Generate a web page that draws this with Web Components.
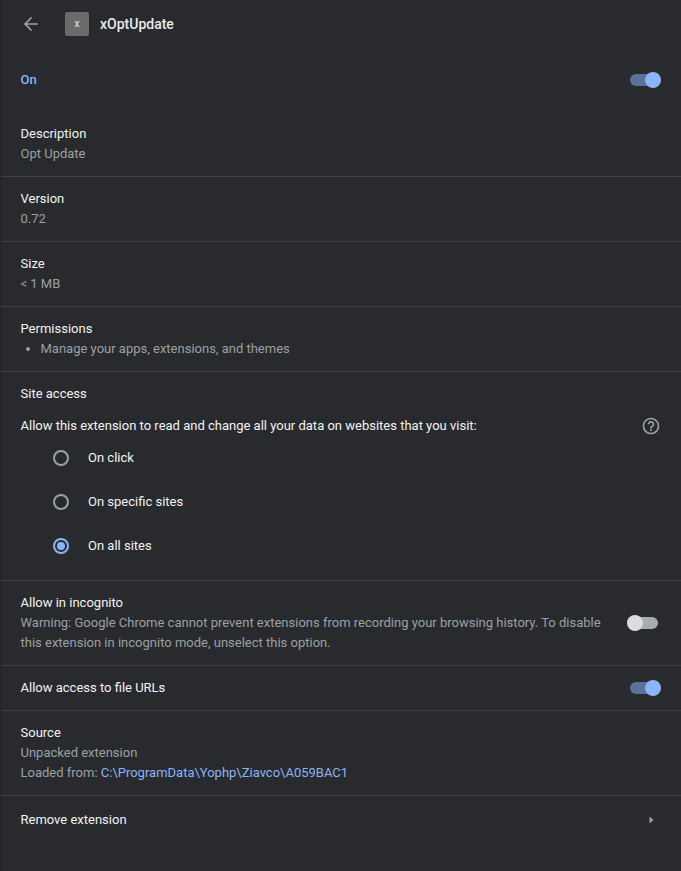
<!DOCTYPE html>
<html><head><meta charset="utf-8"><style>
html,body{margin:0;padding:0;background:#292a2d;height:100%}
body{font:13px/20px Roboto,"Liberation Sans",sans-serif;color:#f1f3f4}
</style></head><body>
<ext-page></ext-page>
<script>
const mk=(name,html)=>customElements.define(name,class extends HTMLElement{
  constructor(){super();this.attachShadow({mode:'open'}).innerHTML=html;}
});
mk('ext-toggle',`<style>
:host{display:block;position:relative;width:28px;height:12px;flex:none}
.t{position:absolute;inset:0;border-radius:6px;background:#a8acb1}
.k{position:absolute;top:-2px;left:-3px;width:16px;height:16px;border-radius:50%;background:#dadce0}
:host([on]) .t{background:#5a7299}
:host([on]) .k{left:auto;right:-3px;background:#8ab4f8}
</style><div class="t"></div><div class="k"></div>`);
mk('ext-radio',`<style>
:host{display:flex;align-items:center;height:44px;padding-left:52px;color:#f1f3f4}
.r{width:16px;height:16px;box-sizing:border-box;border:2px solid #9aa0a6;border-radius:50%;margin-right:19px;display:flex;align-items:center;justify-content:center;flex:none}
:host([on]) .r{border-color:#8ab4f8}
:host([on]) .r::after{content:"";width:8px;height:8px;border-radius:50%;background:#8ab4f8}
</style><span class="r"></span><slot></slot>`);
mk('ext-row',`<style>
:host{display:block;box-sizing:border-box;padding:12px 20px 12px 19.5px;border-top:1px solid #3f4042;min-height:65px}
.l{color:#f1f3f4}
.s{color:#9aa0a6}
::slotted(a){color:#8ab4f8;text-decoration:none}
</style><div class="l"><slot name="label"></slot></div><div class="s"><slot></slot></div>`);
mk('ext-flexrow',`<style>
:host{display:flex;align-items:center;box-sizing:border-box;padding:0 23px 0 19.5px;border-top:1px solid #3f4042;color:#f1f3f4;justify-content:space-between}
</style><slot></slot>`);
mk('ext-header',`<style>
:host{display:flex;align-items:center;height:48px;box-sizing:border-box}
svg.b{margin-left:19px;width:22px;height:22px;flex:none}
.i{width:24px;height:24px;margin-left:23px;background:#6b6b6b;border-radius:2px;color:#e8eaed;font:10px/24px Roboto,sans-serif;text-align:center;flex:none}
.n{margin-left:11px;font-size:14px;font-weight:500;color:#e8eaed}
</style><svg class="b" viewBox="0 0 22 22"><path d="M18 11H5.500M11.500 4.500 5 11l6.500 6.500" fill="none" stroke="#9aa0a6" stroke-width="1.700"/></svg><div class="i">x</div><div class="n">xOptUpdate</div>`);
mk('ext-page',`<style>
:host{display:block;width:681px;height:871px;box-sizing:border-box;border-left:1px solid #232427;overflow:hidden}
.on{display:flex;align-items:center;justify-content:space-between;height:63px;padding:0 23px 0 19.5px;box-sizing:border-box;font-weight:500;color:#8ab4f8}
ul{margin:0;padding:0 0 0 20px;list-style:none}
li{position:relative}
li::before{content:"";position:absolute;left:-14.500px;top:8px;width:4px;height:4px;border-radius:50%;background:#9aa0a6}
.site{display:block;border-top:1px solid #3f4042;height:209px;box-sizing:border-box;padding:12px 20px 0 19.5px}
.q{display:flex;justify-content:space-between;align-items:center;margin-top:12px}
.rows{margin:0 -20px 0 -19.5px}
.q svg{flex:none}
.inc{display:flex;align-items:center;justify-content:space-between;min-height:85px;border-top:1px solid #3f4042;box-sizing:border-box;padding:0 23px 0 19.5px}
.inc .t{width:590px}
.inc .g{color:#9aa0a6}
</style>
<ext-header></ext-header>
<div class="on"><span>On</span><ext-toggle on></ext-toggle></div>
<ext-row style="border-top:0;padding-top:13px"><span slot="label">Description</span>Opt Update</ext-row>
<ext-row><span slot="label">Version</span>0.72</ext-row>
<ext-row><span slot="label">Size</span>&lt; 1 MB</ext-row>
<ext-row><span slot="label">Permissions</span><ul><li>Manage your apps, extensions, and themes</li></ul></ext-row>
<div class="site"><div>Site access</div>
<div class="q"><span>Allow this extension to read and change all your data on websites that you visit:</span>
<svg width="20" height="20" viewBox="0 0 24 24" fill="#9aa0a6"><path d="M11 18h2v-2h-2v2zm1-16C6.480 2 2 6.480 2 12s4.480 10 10 10 10-4.480 10-10S17.520 2 12 2zm0 18c-4.410 0-8-3.590-8-8s3.590-8 8-8 8 3.590 8 8-3.590 8-8 8zm0-14c-2.210 0-4 1.790-4 4h2c0-1.100.9-2 2-2s2 .9 2 2c0 2-3 1.750-3 5h2c0-2.250 3-2.500 3-5 0-2.210-1.790-4-4-4z"/></svg></div>
<div class="rows"><ext-radio>On click</ext-radio><ext-radio>On specific sites</ext-radio><ext-radio on>On all sites</ext-radio></div></div>
<div class="inc"><div class="t"><div>Allow in incognito</div><div class="g">Warning: Google Chrome cannot prevent extensions from recording your browsing history. To disable this extension in incognito mode, unselect this option.</div></div><ext-toggle></ext-toggle></div>
<ext-flexrow style="height:45px"><span>Allow access to file URLs</span><ext-toggle on></ext-toggle></ext-flexrow>
<ext-row style="height:85px"><span slot="label">Source</span>Unpacked extension<br>Loaded from: <a href="#">C:\\ProgramData\\Yophp\\Ziavco\\A059BAC1</a></ext-row>
<ext-flexrow style="height:48px;padding-right:27px"><span>Remove extension</span><svg width="5" height="10" viewBox="0 0 5 10"><path d="M.5 1.500 4.500 5 .5 8.500z" fill="#9aa0a6"/></svg></ext-flexrow>
`);
</script></body></html>
